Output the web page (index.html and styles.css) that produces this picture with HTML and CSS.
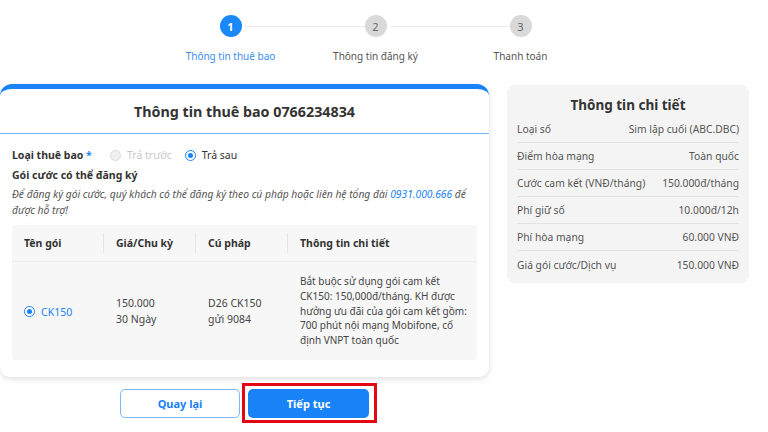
FILE: index.html
```html
<!DOCTYPE html>
<html lang="vi">
<head>
<meta charset="utf-8">
<link rel="stylesheet" href="styles.css">
</head>
<body>
<div class="page">
  <div class="stepper">
    <div class="step active"><span class="dot">1</span><span class="label">Thông tin thuê bao</span></div>
    <div class="step"><span class="dot">2</span><span class="label">Thông tin đăng ký</span></div>
    <div class="step last"><span class="dot">3</span><span class="label">Thanh toán</span></div>
  </div>

  <div class="main">
    <div class="left">
      <div class="card">
        <div class="card-head">Thông tin thuê bao 0766234834</div>
        <div class="card-body">
          <div class="type-row">
            <span class="field">Loại thuê bao <span class="star">*</span></span>
            <span class="radio disabled"><span class="circle"></span>Trả trước</span>
            <span class="radio checked"><span class="circle"></span>Trả sau</span>
          </div>
          <div class="section">Gói cước có thể đăng ký</div>
          <p class="note">Để đăng ký gói cước, quý khách có thể đăng ký theo cú pháp hoặc liên hệ tổng đài <span class="phone">0931.000.666</span> để được hỗ trợ!</p>
          <div class="table">
            <div class="thead">
              <div class="th">Tên gói</div>
              <div class="th">Giá/Chu kỳ</div>
              <div class="th">Cú pháp</div>
              <div class="th nosep">Thông tin chi tiết</div>
            </div>
            <div class="trow">
              <div class="td"><span class="radio checked pkg"><span class="circle"></span>CK150</span></div>
              <div class="td">150.000<br>30 Ngày</div>
              <div class="td">D26 CK150<br>gửi 9084</div>
              <div class="td detail"><p class="detail-text">Bắt buộc sử dụng gói cam kết CK150: 150,000đ/tháng. KH được hưởng ưu đãi của gói cam kết gồm: 700 phút nội mạng Mobifone, cố định VNPT toàn quốc</p></div>
            </div>
          </div>
        </div>
      </div>
      <div class="actions">
        <button class="btn outline">Quay lại</button>
        <span class="highlight"><button class="btn primary">Tiếp tục</button></span>
      </div>
    </div>

    <div class="side">
      <div class="side-title">Thông tin chi tiết</div>
      <div class="srow"><span>Loại số</span><span>Sim lặp cuối (ABC.DBC)</span></div>
      <div class="srow"><span>Điểm hòa mạng</span><span>Toàn quốc</span></div>
      <div class="srow"><span>Cước cam kết (VNĐ/tháng)</span><span>150.000đ/tháng</span></div>
      <div class="srow"><span>Phí giữ số</span><span>10.000đ/12h</span></div>
      <div class="srow"><span>Phí hòa mạng</span><span>60.000 VNĐ</span></div>
      <div class="srow"><span>Giá gói cước/Dịch vụ</span><span>150.000 VNĐ</span></div>
    </div>
  </div>
</div>
</body>
</html>
```

FILE: styles.css
```css
* { box-sizing: border-box; }
html, body { margin: 0; padding: 0; background: #fff; }
body {
  font-family: "Noto Sans", "Liberation Sans", sans-serif;
  color: #333;
  width: 768px;
  height: 432px;
  overflow: hidden;
}

.stepper {
  display: flex;
  padding: 15px 0 0 158px;
  height: 84px;
}
.step {
  width: 145px;
  display: flex;
  flex-direction: column;
  align-items: center;
  position: relative;
}
.step::after {
  content: "";
  position: absolute;
  top: 11px;
  left: 87px;
  width: 121px;
  height: 1px;
  background: #ececec;
}
.step.last::after { display: none; }
.dot {
  width: 22px;
  height: 22px;
  border-radius: 50%;
  background: #d9d9d9;
  color: #666;
  font-size: 11px;
  display: flex;
  align-items: center;
  justify-content: center;
}
.step.active .dot { background: #1a88f8; color: #fff; font-weight: 700; }
.label {
  margin-top: 12px;
  font-size: 10px;
  color: #555;
  white-space: nowrap;
}
.step.active .label { color: #3b8df0; }

.main {
  display: flex;
  align-items: flex-start;
}
.left { width: 489px; }
.card {
  border-top: 5px solid #1a82f7;
  border-radius: 12px 12px 10px 10px;
  background: #fff;
  box-shadow: 0 2px 6px rgba(0,0,0,0.13);
  height: 293px;
}
.card-head {
  height: 45px;
  display: flex;
  align-items: center;
  justify-content: center;
  font-size: 14.3px;
  font-weight: 700;
  color: #333;
  border-bottom: 1px solid #74b4f6;
}
.card-body { padding: 12px 12px 0 12px; }

.type-row {
  display: flex;
  align-items: center;
  height: 18px;
  font-size: 10.5px;
}
.field { font-weight: 700; width: 98px; color: #333; }
.star { color: #1a82f7; }
.radio {
  display: inline-flex;
  align-items: center;
  margin-right: 13px;
  color: #333;
}
.circle {
  width: 11px;
  height: 11px;
  border-radius: 50%;
  border: 1px solid #1a82f7;
  margin-right: 6px;
  display: inline-flex;
  align-items: center;
  justify-content: center;
  background: #fff;
}
.radio.checked .circle::after {
  content: "";
  width: 5px;
  height: 5px;
  border-radius: 50%;
  background: #1a82f7;
}
.radio.disabled { color: #c8c8c8; }
.radio.disabled .circle { border-color: #ddd; background: #f0f0f0; }

.section {
  font-size: 10.5px;
  font-weight: 700;
  margin-top: 3px;
  height: 16px;
  line-height: 16px;
}
.note {
  margin: 4px 0 0 0;
  font-size: 10.3px;
  font-style: italic;
  color: #555;
  line-height: 15.5px;
  padding-right: 10px;
}
.phone { color: #1a82f7; }

.table {
  margin-top: 7px;
  background: #f7f7f7;
  border-radius: 3px;
  font-size: 10.5px;
}
.thead, .trow {
  display: grid;
  grid-template-columns: 92px 92px 92px 1fr;
}
.thead {
  height: 37px;
  border-bottom: 1px solid #ededed;
  align-items: center;
}
.th {
  font-weight: 700;
  padding-left: 12px;
  color: #333;
  position: relative;
}
.th::after {
  content: "";
  position: absolute;
  right: 0;
  top: -3px;
  height: 20px;
  width: 1px;
  background: #e6e6e6;
}
.th.nosep::after { display: none; }
.trow {
  height: 98px;
  align-items: center;
  color: #444;
}
.td {
  padding-left: 12px;
  line-height: 16px;
}
.td.detail {
  line-height: 14.8px;
  font-size: 10px;
}
.detail-text {
  margin: 0;
  max-width: 170px;
}
.pkg { color: #1a82f7; }

.actions {
  display: flex;
  align-items: center;
  gap: 2px;
  padding-left: 120px;
  margin-top: 6px;
}
.btn {
  font-family: inherit;
  font-size: 11px;
  font-weight: 700;
  height: 29px;
  border-radius: 5px;
  cursor: pointer;
}
.btn.outline {
  width: 120px;
  background: #fff;
  color: #1a82f7;
  border: 1px solid #7ab7f7;
}
.btn.primary {
  width: 121px;
  background: #1a82f7;
  color: #fff;
  border: none;
}
.highlight {
  display: inline-flex;
  border: 3px solid #e30613;
  padding: 3px 5px 2px 3px;
}

.side {
  width: 242px;
  margin-left: 18px;
  margin-top: 1px;
  background: #f4f4f4;
  border-radius: 8px;
  padding: 10px 10px 5px 10px;
  font-size: 10.3px;
  color: #555;
}
.side-title {
  text-align: center;
  font-size: 13.5px;
  font-weight: 700;
  color: #333;
  height: 21px;
  line-height: 21px;
}
.srow {
  display: flex;
  justify-content: space-between;
  align-items: center;
  height: 27px;
  border-bottom: 1px solid #e2e2e2;
}
.srow:last-child { border-bottom: none; }
```
